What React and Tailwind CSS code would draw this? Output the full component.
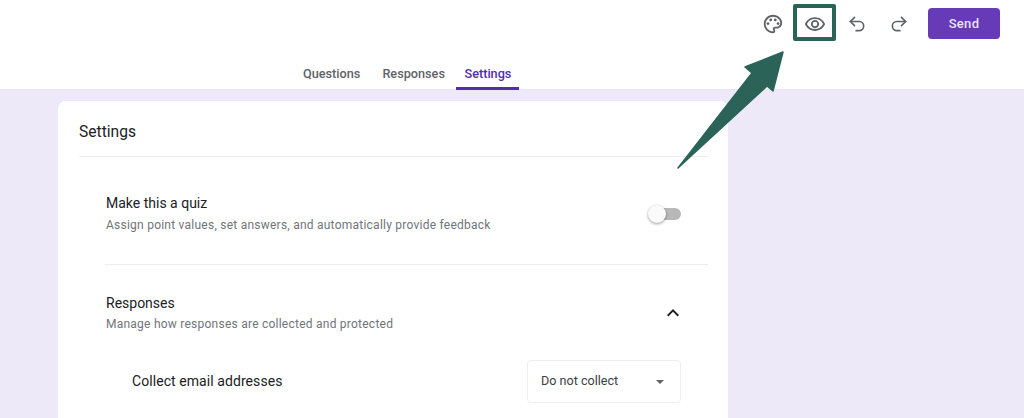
import React from 'react'
import { Undo2, Redo2 } from 'lucide-react'
import { MdOutlinePalette, MdOutlineRemoveRedEye, MdExpandLess } from 'react-icons/md'

const font = "font-['Roboto',sans-serif]"

const App = () => {
  return (
    <div className={`relative h-[418px] w-[1024px] overflow-hidden bg-[#ede9f8] ${font}`}>
      {/* top bar + tabs */}
      <div className="h-[90px] bg-white border-b border-[#e9e6f0]">
        <div className="flex h-[47px] items-center justify-end pr-[24px]">
          <div className="flex h-[42px] w-[42px] items-center justify-center text-[#5f6368]"><MdOutlinePalette size={22} /></div>
          <div className="flex h-[42px] w-[42px] items-center justify-center text-[#5f6368]"><MdOutlineRemoveRedEye size={22} /></div>
          <div className="flex h-[42px] w-[42px] items-center justify-center text-[#5f6368]"><Undo2 size={20} strokeWidth={2} /></div>
          <div className="flex h-[42px] w-[41px] items-center justify-center text-[#5f6368]"><Redo2 size={20} strokeWidth={2} /></div>
          <button className="ml-[9px] h-[31px] w-[72px] rounded-[4px] bg-[#673ab7] text-[13px] font-medium tracking-[0.3px] text-[#ece6f6]">
            Send
          </button>
        </div>
        <div className="flex h-[42px] pl-[294px] text-[12.7px] font-medium">
          <div className="px-[9px] pt-[17px] text-[#5f6368]">Questions</div>
          <div className="pl-[13px] pr-[12px] pt-[17px] text-[#5f6368]">Responses</div>
          <div className="ml-[-0.5px] h-[43px] w-[63px] border-b-[3px] border-[#512da8] pt-[17px] text-center text-[#512da8]">Settings</div>
        </div>
      </div>

      {/* settings card */}
      <div className="ml-[58px] mt-[11px] h-[400px] w-[670px] rounded-t-[8px] bg-white pl-[21px] pr-[20px]">
        <div className="h-[56px] border-b border-[#eeeeee] pt-[20px] text-[15.6px] leading-[22px] text-[#202124]">Settings</div>

        <div className="ml-[26px] flex h-[108px] items-center justify-between border-b border-[#eeeeee] pl-[1px] pr-[27px] pt-[6px]">
          <div>
            <div className="text-[14px] leading-[20px] text-[#202124]">Make this a quiz</div>
            <div className="mt-[2px] text-[12px] tracking-[0.24px] leading-[20px] text-[#70757a]">
              Assign point values, set answers, and automatically provide feedback
            </div>
          </div>
          <div className="relative h-[12px] w-[30px] rounded-full bg-[#b8b8b8]">
            <div className="absolute left-[-3px] top-[-3px] h-[18px] w-[18px] rounded-full bg-[#fafafa] shadow-[0_1px_3px_rgba(0,0,0,0.4)]" />
          </div>
        </div>

        <div className="flex h-[96px] items-center justify-between pl-[27px] pr-[26px]">
          <div>
            <div className="pt-[1px] text-[14px] leading-[20px] text-[#202124]">Responses</div>
            <div className="mt-[1px] text-[12px] tracking-[0.24px] leading-[20px] text-[#70757a]">
              Manage how responses are collected and protected
            </div>
          </div>
          <MdExpandLess size={24} className="text-[#202124] mr-[-3px]" />
        </div>

        <div className="mt-[-1px] flex items-center justify-between pl-[53px] pr-[27px]">
          <div className="text-[14px] tracking-[0.07px] text-[#202124]">Collect email addresses</div>
          <div className="flex h-[43px] w-[154px] items-center justify-between rounded-[4px] border border-[#eeeeee] pl-[13px] pr-[16px] text-[12.6px] text-[#3c4043]">
            Do not collect
            <div className="h-0 w-0 border-x-[4px] border-t-[4px] border-x-transparent border-t-[#5f6368]" />
          </div>
        </div>
      </div>

      {/* annotation: highlight box + arrow */}
      <div className="absolute left-[793px] top-[4px] h-[37px] w-[43px] rounded-[2px] border-[4px] border-[#2b6359]" />
      <svg className="absolute left-0 top-0" width="1024" height="418" viewBox="0 0 1024 418" fill="none">
        <path d="M678 168 L752 73 L745 67 L783 52 L773 91 L767 86 Z" fill="#2b6359" stroke="#2b6359" strokeWidth="1.5" strokeLinejoin="round" />
      </svg>
    </div>
  )
}

export default App
